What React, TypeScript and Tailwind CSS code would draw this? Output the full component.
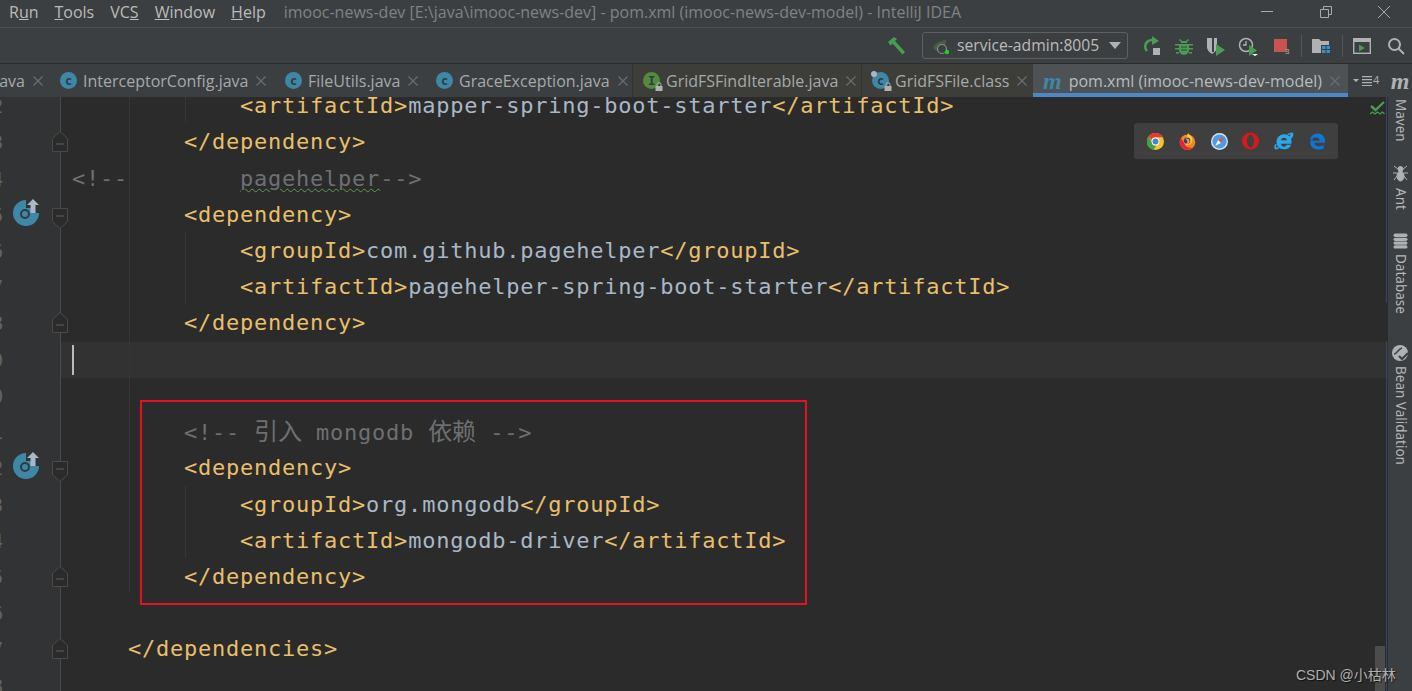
import type { ReactNode } from "react";

const MONO = "font-['DejaVu_Sans_Mono','Noto_Sans_CJK_SC',monospace] text-[22px] tracking-[0.76px]";

function ClassIcon({ letter = "c", color = "#3f87a6", lock = false, pin = false }: { letter?: string; color?: string; lock?: boolean; pin?: boolean }) {
  return (
    <span className="relative mr-[6px] flex h-[17px] w-[17px] shrink-0 items-center justify-center rounded-full" style={{ background: color }}>
      <span className="font-['DejaVu_Sans_Mono',monospace] text-[12px] leading-none font-bold text-[#2f3b40]">{letter}</span>
      {pin && <span className="absolute -top-[1px] -left-[1px] h-[6px] w-[6px] rounded-full bg-[#a9b7c6]" />}
      {lock && (
        <svg className="absolute -right-[3px] -bottom-[2px]" width="8" height="9" viewBox="0 0 8 9">
          <path d="M2 4V2.6a2 2 0 0 1 4 0V4" fill="none" stroke="#afb1b3" strokeWidth="1" />
          <rect x="0.5" y="4" width="7" height="5" fill="#afb1b3" />
        </svg>
      )}
    </span>
  );
}

function Close() {
  return (
    <svg className="ml-[8px] shrink-0" width="10" height="10" viewBox="0 0 10 10" stroke="#6a6d70" strokeWidth="1.2">
      <path d="M0.5 0.5l9 9M9.5 0.5l-9 9" />
    </svg>
  );
}

function Tab({ children, icon, className = "" }: { children: ReactNode; icon?: ReactNode; className?: string }) {
  return (
    <div className={`flex h-full shrink-0 items-center text-[16px] text-[#a6a9ab] ${className}`}>
      {icon}
      <span>{children}</span>
      <Close />
    </div>
  );
}

function Slot({ children }: { children: ReactNode }) {
  return <div className="flex h-8 w-8 items-center justify-center">{children}</div>;
}

function Toolbar() {
  return (
    <div className="flex h-[36px] items-center justify-end border-b border-[#2b2b2b]">
      <div className="mr-[9px]">
        <Slot>
          <svg width="20" height="20" viewBox="0 0 20 20" fill="#499c54">
            <path d="M1 6l6-5 3 2-2 2 10 11-2.5 2.5L5.5 7.5l-2 2z" />
          </svg>
        </Slot>
      </div>
      <div className="mr-[8px] flex h-[27px] w-[206px] items-center rounded-[3px] border border-[#5e6060] pl-[9px] text-[15.7px] text-[#bbbbbb]">
        <svg width="18" height="18" viewBox="0 0 18 18" className="mr-[7px] shrink-0">
          <path d="M1 11c2-5 7-7 13-8l-1 8-5 3c-3 0-5-1-7-3z" fill="#44613f" />
          <circle cx="10" cy="12" r="4.5" fill="#3c3f41" stroke="#8a8d90" strokeWidth="1.2" />
          <circle cx="15" cy="15" r="2.2" fill="#19d11f" />
        </svg>
        <span>service-admin:8005</span>
        <svg width="12" height="7" viewBox="0 0 12 7" className="ml-[10px]" fill="#afb1b3">
          <path d="M0 0h12L6 7z" />
        </svg>
      </div>
      <Slot>
        <svg width="20" height="20" viewBox="0 0 20 20">
          <path d="M5 15a6.5 6.5 0 0 1 0-9c2-2 5-2.400 7-1" fill="none" stroke="#499c54" strokeWidth="2.6" />
          <path d="M10 0l7 5-7 4z" fill="#499c54" />
          <rect x="11" y="12" width="7" height="7" fill="#afb1b3" />
        </svg>
      </Slot>
      <Slot>
        <svg width="18" height="18" viewBox="0 0 18 18" fill="#499c54">
          <path d="M5 2l2 2h4l2-2 1 1-2 2v1H6V5L4 3z" />
          <path d="M4 7h10v6a5 5 0 0 1-10 0z" />
          <path d="M0 7h4v1.500H0zM14 7h4v1.500h-4zM0 11h4v1.500H0zM14 11h4v1.500h-4zM1 15h3v1.500H1zM14 15h3v1.500h-3z" />
          <path d="M6 10h6M6 13h6" stroke="#3c3f41" strokeWidth="1.200" />
        </svg>
      </Slot>
      <Slot>
        <svg width="20" height="20" viewBox="0 0 20 20">
          <path d="M1 2h10v9c0 3-2 5-5 7-3-2-5-4-5-7z" fill="#afb1b3" />
          <path d="M6 2h2v14H6z" fill="#3c3f41" />
          <path d="M10 8l9 6-9 6z" fill="#499c54" />
        </svg>
      </Slot>
      <Slot>
        <svg width="20" height="20" viewBox="0 0 20 20">
          <circle cx="8" cy="9" r="6.5" fill="none" stroke="#afb1b3" strokeWidth="1.500" />
          <path d="M8 5v4H5" fill="none" stroke="#afb1b3" strokeWidth="1.300" />
          <path d="M11 9l8 5.500-8 5.500z" fill="#499c54" />
          <path d="M14 18h6l-3 2z" fill="#fff" />
        </svg>
      </Slot>
      <Slot>
        <div className="relative h-[13px] w-[13px] bg-[#c75450]">
          <span className="absolute -right-[3px] -bottom-[4px] font-['Liberation_Sans',sans-serif] text-[8px] leading-none text-[#afb1b3]">3</span>
        </div>
      </Slot>
      <div className="mr-[3px] ml-[5px] h-[22px] w-px bg-[#515658]" />
      <Slot>
        <svg width="20" height="18" viewBox="0 0 20 18">
          <path d="M1 2h7l2 2h8v4H10v8H1z" fill="#afb1b3" />
          <path d="M11 9h3.500v3H11zM15.500 9H19v3h-3.500zM11 13h3.500v3H11zM15.500 13H19v3h-3.500z" fill="#3592c4" />
        </svg>
      </Slot>
      <div className="mr-[3px] ml-[5px] h-[22px] w-px bg-[#515658]" />
      <div className="mr-[2px]">
        <Slot>
          <svg width="18" height="16" viewBox="0 0 18 16">
            <rect x="0.700" y="0.700" width="16.600" height="14.600" fill="none" stroke="#afb1b3" strokeWidth="1.400" />
            <path d="M1 1h16v3H1z" fill="#afb1b3" />
            <path d="M6 6.500l6 3.500-6 3.500z" fill="#499c54" />
          </svg>
        </Slot>
      </div>
      <Slot>
        <svg width="18" height="18" viewBox="0 0 18 18" fill="none" stroke="#afb1b3" strokeWidth="2">
          <circle cx="7.500" cy="7.500" r="5.500" />
          <path d="M11.500 11.500l5.500 5.500" />
        </svg>
      </Slot>
    </div>
  );
}

function Chrome() {
  return (
    <svg width="17" height="17" viewBox="0 0 24 24">
      <circle cx="12" cy="12" r="12" fill="#fbc02d" />
      <path d="M12 0a12 12 0 0 1 10.400 6H12a6 6 0 0 0-5.700 4L2.200 4.500A12 12 0 0 1 12 0z" fill="#e53935" />
      <path d="M2.200 4.500L7 13a6 6 0 0 0 6 4.800L9.500 23.700A12 12 0 0 1 2.200 4.500z" fill="#43a047" />
      <circle cx="12" cy="12" r="5.500" fill="#fff" />
      <circle cx="12" cy="12" r="4.200" fill="#4285d6" />
    </svg>
  );
}

function Firefox() {
  return (
    <svg width="17" height="17" viewBox="0 0 24 24">
      <circle cx="12" cy="13" r="11" fill="#f5861f" />
      <path d="M3 7a11 11 0 0 0 9 17 11 11 0 0 0 8-4c-5 2-11 0-12-5z" fill="#e5243b" />
      <path d="M13 0c1 3 6 4 6 10 0 4-3 7-7 7-2 0-4-1-5-3 3 1 6 0 6-2s-3-2-3-4c0-3 2-5 3-8z" fill="#ffcb2f" />
      <circle cx="11.500" cy="11" r="4.500" fill="#36398f" />
      <path d="M9 8c3-1 6 1 6 4s-3 4-6 3c2 0 3-1 3-3s-2-3-3-4z" fill="#ffa51f" />
    </svg>
  );
}

function Safari() {
  return (
    <svg width="17" height="17" viewBox="0 0 24 24">
      <circle cx="12" cy="12" r="12" fill="#dfe3e8" />
      <circle cx="12" cy="12" r="10" fill="#4a9be8" />
      <path d="M18 6l-8 4 4 4z" fill="#ef4a3c" />
      <path d="M6 18l4-8 4 4z" fill="#fff" />
    </svg>
  );
}

function Opera() {
  return (
    <svg width="17" height="18" viewBox="0 0 24 24">
      <ellipse cx="12" cy="12" rx="12" ry="12" fill="#d7191c" />
      <ellipse cx="12" cy="12" rx="5" ry="9" fill="#3f3f3f" />
    </svg>
  );
}

function IeLogo() {
  return (
    <svg width="20" height="18" viewBox="0 0 26 24">
      <path d="M13 3c-6 0-10 5-10 10 0 6 4 10 10 10 5 0 8-2 9.500-6h-6c-1 2-2 2.500-3.500 2.500-2.500 0-4-2-4-4h14V13c0-6-4-10-10-10zM9 11c.3-2 2-3.500 4-3.500s3.700 1.500 4 3.500z" fill="#29a8ea" />
      <path d="M22 1c2-1 3.500 0 3.500 2 0 2-1.500 5-3.500 7l-2-4 2-3c-1 0-2 .5-3 1l-2-1c2-1 3.500-1.500 5-2zM1 16c-1 3-1.500 6 0 7 1.500.7 4-.3 6-2l-2-1c-1 .7-2 1-2.500.7-.4-.5 0-2 1-3.700z" fill="#29a8ea" />
    </svg>
  );
}

function Edge() {
  return (
    <svg width="16" height="17" viewBox="0 0 24 24">
      <path d="M1 11C2 4 7 0 13 0c6 0 11 4 11 11v3H8c0 5 8 7 14 3v5c-7 4-20 2-20-8 0-4 3-7 6-8-2 1-3 3-3 5h11c0-3-2-5-6-5-4 0-7 2-9 5z" fill="#0c78d4" />
    </svg>
  );
}

function BrowserBar() {
  return (
    <div className="absolute top-[26px] left-[1134px] flex h-[36px] w-[204px] items-center justify-between rounded-[3px] bg-[#3f3f3f] px-[13px]">
      <Chrome />
      <Firefox />
      <Safari />
      <Opera />
      <IeLogo />
      <Edge />
    </div>
  );
}

function RunIcon() {
  return (
    <svg className="absolute top-[2px] left-[12px]" width="28" height="28" viewBox="0 0 28 28">
      <path d="M14 1a13 13 0 1 0 13 13h-8V9h-5z" fill="#3f87a6" />
      <circle cx="13" cy="15" r="4" fill="none" stroke="#2f3b40" strokeWidth="2" />
      <path d="M21 0l6 6h-3.500v8h-5V6H15z" fill="#a9b7c6" />
    </svg>
  );
}

function Fold({ up }: { up?: boolean }) {
  return (
    <svg className={`absolute -left-[8px] z-10 ${up ? "top-[7px]" : "top-[11px]"}`} width="16" height="21" viewBox="0 0 16 21">
      <path d={up ? "M.500 20.500V7.500L8 .500l7.500 7v13z" : "M.500 .500h15v13L8 20.500l-7.500-7z"} fill="#2b2b2b" stroke="#4a4a4a" />
      <path d={up ? "M4 13h8" : "M4 8h8"} stroke="#5f6061" />
    </svg>
  );
}

type Line = {
  no: string;
  code?: ReactNode;
  fold?: "up" | "down";
  run?: boolean;
  current?: boolean;
};

const Tag = ({ children }: { children: ReactNode }) => <span className="text-[#e8bf6a]">{children}</span>;
const Val = ({ children }: { children: ReactNode }) => <span className="text-[#a9b7c6]">{children}</span>;
const Rem = ({ children }: { children: ReactNode }) => <span className="text-[#6d7073]">{children}</span>;
const Cjk = ({ children }: { children: ReactNode }) => <span className="text-[24px] tracking-normal text-[#6d7073]">{children}</span>;

const LINES: Line[] = [
  { no: "2", code: <>{"            "}<Tag>{"<artifactId>"}</Tag><Val>mapper-spring-boot-starter</Val><Tag>{"</artifactId>"}</Tag></> },
  { no: "3", fold: "up", code: <>{"        "}<Tag>{"</dependency>"}</Tag></> },
  { no: "4", code: <><Rem>{"<!--"}</Rem><Rem>{"        "}</Rem><span className="text-[#6d7073] underline decoration-[#629755] decoration-wavy decoration-1 underline-offset-2">pagehelper</span><Rem>{"-->"}</Rem></> },
  { no: "5", fold: "down", run: true, code: <>{"        "}<Tag>{"<dependency>"}</Tag></> },
  { no: "6", code: <>{"            "}<Tag>{"<groupId>"}</Tag><Val>com.github.pagehelper</Val><Tag>{"</groupId>"}</Tag></> },
  { no: "7", code: <>{"            "}<Tag>{"<artifactId>"}</Tag><Val>pagehelper-spring-boot-starter</Val><Tag>{"</artifactId>"}</Tag></> },
  { no: "8", fold: "up", code: <>{"        "}<Tag>{"</dependency>"}</Tag></> },
  { no: "9", current: true },
  { no: "0" },
  { no: "1", code: <>{"        "}<Rem>{"<!-- "}</Rem><Cjk>引入</Cjk><Rem>{" mongodb "}</Rem><Cjk>依赖</Cjk><Rem>{" -->"}</Rem></> },
  { no: "2", fold: "down", run: true, code: <>{"        "}<Tag>{"<dependency>"}</Tag></> },
  { no: "3", code: <>{"            "}<Tag>{"<groupId>"}</Tag><Val>org.mongodb</Val><Tag>{"</groupId>"}</Tag></> },
  { no: "4", code: <>{"            "}<Tag>{"<artifactId>"}</Tag><Val>mongodb-driver</Val><Tag>{"</artifactId>"}</Tag></> },
  { no: "5", fold: "up", code: <>{"        "}<Tag>{"</dependency>"}</Tag></> },
  { no: "6" },
  { no: "7", fold: "up", code: <>{"    "}<Tag>{"</dependencies>"}</Tag></> },
  { no: "8" },
];

function CodeLine({ line }: { line: Line }) {
  return (
    <div className={`flex h-[36.23px] items-center ${line.current ? "bg-[#323232]" : ""}`}>
      <div className="relative flex h-full w-[60px] shrink-0 items-center bg-[#313335]">
        <span className="w-[4px] overflow-hidden font-['DejaVu_Sans_Mono',monospace] text-[20px] leading-none text-[#606366] [direction:rtl]">{line.no}</span>
        {line.run && <RunIcon />}
      </div>
      <div className="relative h-full w-0">
        <div className="absolute top-0 bottom-0 left-0 w-px bg-[#4a4a4a]" />
        {line.fold && <Fold up={line.fold === "up"} />}
      </div>
      <div className="flex h-full flex-1 items-center pl-[12px]">
        {line.current && <div className="h-[30px] w-[2px] bg-[#bbbbbb]" />}
        <span className="whitespace-pre">{line.code}</span>
      </div>
    </div>
  );
}

function RailItem({ icon, label, className = "", gap = "mt-[3px]" }: { icon: ReactNode; label: string; className?: string; gap?: string }) {
  return (
    <div className={`flex flex-col items-center ${className}`}>
      {icon}
      <span className={`font-['Noto_Sans',sans-serif] text-[13.5px] leading-none text-[#b4b6b8] [writing-mode:vertical-rl] ${gap}`}>{label}</span>
    </div>
  );
}

function Rail() {
  return (
    <div className="flex min-h-0 w-[24px] flex-1 flex-col items-center bg-[#3c3f41]">
      <RailItem label="Maven" icon={<span />} className="-mt-[1px]" />
      <RailItem
        className="mt-[23px]"
        gap="mt-[6px]"
        label="Ant"
        icon={
          <svg width="15" height="17" viewBox="0 0 15 17" stroke="#afb1b3" fill="#afb1b3">
            <ellipse cx="7.500" cy="4" rx="2.500" ry="2.500" />
            <ellipse cx="7.500" cy="11" rx="3.500" ry="5" />
            <path d="M1 1l4 3M14 1l-4 3M0 8h4M15 8h-4M1 15l3-4M14 15l-3-4" fill="none" />
          </svg>
        }
      />
      <RailItem
        className="mt-[24px]"
        gap="mt-[5px]"
        label="Database"
        icon={
          <svg width="15" height="16" viewBox="0 0 15 16" fill="#afb1b3">
            <rect x="0.500" y="0.500" width="14" height="3.500" rx="1.700" />
            <rect x="0.500" y="4.700" width="14" height="3.200" rx="1.600" />
            <rect x="0.500" y="8.500" width="14" height="3.200" rx="1.600" />
            <rect x="0.500" y="12.300" width="14" height="3.200" rx="1.600" />
          </svg>
        }
      />
      <RailItem
        className="mt-[30px]"
        gap="mt-[4px]"
        label="Bean Validation"
        icon={
          <svg width="16" height="18" viewBox="0 0 16 18">
            <ellipse cx="8" cy="9" rx="8" ry="8" fill="#afb1b3" />
            <path d="M2 10c3 0 4-5 8-6" stroke="#3c3f41" strokeWidth="1.500" fill="none" />
            <path d="M7 12l3 3 6-6" stroke="#3c3f41" strokeWidth="2" fill="none" />
          </svg>
        }
      />
    </div>
  );
}

export default function App() {
  return (
    <div className="relative flex h-[691px] w-[1412px] flex-col overflow-hidden bg-[#2b2b2b] font-['Open_Sans','Noto_Sans',sans-serif]">
      <div className="flex h-[28px] shrink-0 items-center border-b border-[#4b4d4f] bg-[#3c3f41] pb-[4px] pl-[9px] text-[16px]">
        <div className="flex gap-[16px] text-[#bbbbbb]">
          <span>R<span className="underline">u</span>n</span>
          <span><span className="underline">T</span>ools</span>
          <span>VC<span className="underline">S</span></span>
          <span><span className="underline">W</span>indow</span>
          <span><span className="underline">H</span>elp</span>
        </div>
        <span className="ml-[18px] text-[#7f8285]">imooc-news-dev [E:\java\imooc-news-dev] - pom.xml (imooc-news-dev-model) - IntelliJ IDEA</span>
        <div className="ml-auto flex items-center pr-[22px]">
          <div className="h-px w-[12px] bg-[#a8aaac]" />
          <svg className="ml-[47px]" width="12" height="12" viewBox="0 0 12 12" fill="none" stroke="#a8aaac">
            <path d="M.500 3.500h8v8h-8zM3.500 3.500v-3h8v8h-3" />
          </svg>
          <svg className="ml-[46px]" width="12" height="12" viewBox="0 0 12 12" stroke="#a8aaac">
            <path d="M0 0l12 12M12 0L0 12" />
          </svg>
        </div>
      </div>

      <div className="shrink-0 bg-[#3c3f41]">
        <Toolbar />
      </div>

      <div className="flex min-h-0 flex-1">
        <div className="flex min-w-0 flex-1 flex-col">
          <div className="z-10 flex h-[33px] shrink-0 items-stretch bg-[#3c3f41]">
            <Tab className="-ml-[1px] w-[52px] justify-end pr-[8px]">ava</Tab>
            <Tab className="w-[225px] pl-[9px]" icon={<ClassIcon />}>InterceptorConfig.java</Tab>
            <Tab className="w-[151px] pl-[9px]" icon={<ClassIcon />}>FileUtils.java</Tab>
            <Tab className="w-[205px] pl-[9px]" icon={<ClassIcon />}>GraceException.java</Tab>
            <Tab className="w-[229px] border-l border-[#323232] bg-[#3d3e39] pl-[10px]" icon={<ClassIcon letter="I" color="#55893f" lock />}>GridFSFindIterable.java</Tab>
            <Tab className="w-[172px] border-l border-[#323232] bg-[#3d3e39] pl-[10px]" icon={<ClassIcon color="#3f87a6" lock pin />}>GridFSFile.class</Tab>
            <Tab className="w-[315px] bg-[#4e5254] pl-[10px] text-[#bbbbbb] shadow-[inset_0_-4px_0_#4a88c7]" icon={<span className="mr-[7px] font-['Liberation_Serif',serif] text-[24px] leading-none font-bold text-[#3f87a6] italic">m</span>}>pom.xml (imooc-news-dev-model)</Tab>
            <div className="flex flex-1 items-center pl-[5px] text-[11px] text-[#afb1b3]">
              <svg width="20" height="11" viewBox="0 0 20 11" fill="#afb1b3">
                <path d="M0 4h6L3 7zM9 1h10v1.300H9zM9 4h10v1.300H9zM9 7h10v1.300H9zM9 10h10v1H9z" />
              </svg>
              <span>4</span>
            </div>
          </div>

          <div className="relative flex min-h-0 flex-1 overflow-hidden bg-[#2b2b2b]">
            <div className={`min-w-0 flex-1 -translate-y-[9px] leading-none ${MONO}`}>
              {LINES.map((line, i) => (
                <CodeLine key={i} line={line} />
              ))}
            </div>
            <div className="absolute top-0 left-[129px] h-[496px] w-px bg-[#363636]" />
            <div className="absolute top-0 left-[185px] h-[26px] w-px bg-[#363636]" />
            <div className="absolute top-[135px] left-[185px] h-[72px] w-px bg-[#363636]" />
            <div className="absolute top-[389px] left-[185px] h-[72px] w-px bg-[#363636]" />
            <div className="absolute top-[303px] left-[140px] h-[205px] w-[667px] border-2 border-[#e81123]" />
            <svg className="absolute top-[4px] left-[1370px]" width="15" height="15" viewBox="0 0 15 15" fill="none" stroke="#499c54">
              <path d="M1 5l4.500 4L14 1" strokeWidth="2.400" />
              <path d="M0 13l2.500-2 2.500 2 2.500-2 2.500 2 2.500-2 2 2" strokeWidth="1.200" />
            </svg>
            <div className="absolute top-[549px] left-[1375px] h-[45px] w-[10px] bg-[#4c4c4c]" />
            <div className="absolute top-0 left-[1386px] h-[206px] w-px bg-[#2d4a6a]" />
            <div className="absolute top-[244px] left-[1386px] h-[350px] w-px bg-[#2d4a6a]" />
            <BrowserBar />
          </div>
        </div>
        <div className="flex w-[24px] shrink-0 flex-col">
          <div className="flex h-[33px] w-[24px] shrink-0 items-center justify-center bg-[#3c3f41]">
            <span className="font-['Liberation_Serif',serif] text-[24px] leading-none font-bold text-[#afb1b3] italic">m</span>
          </div>
          <Rail />
        </div>
      </div>
      <span className="absolute top-[665px] left-[1296px] font-['Liberation_Sans','Noto_Sans_CJK_SC',sans-serif] text-[14px] whitespace-nowrap text-[#b0b0b0] [text-shadow:1px_1px_1px_#111]">CSDN @小枯林</span>
    </div>
  );
}
